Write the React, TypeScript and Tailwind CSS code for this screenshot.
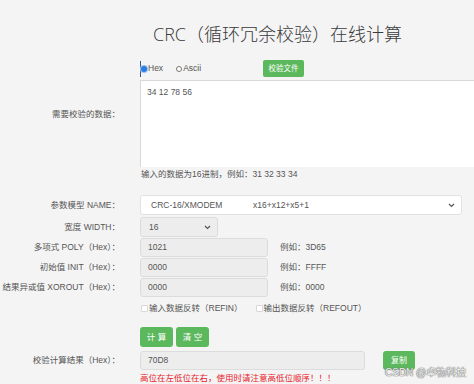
import React from "react";

const font = { fontFamily: '"Liberation Sans", Arial, "Noto Sans CJK SC", sans-serif' };

function Chevron() {
  return (
    <svg width="7" height="5" viewBox="0 0 7 5" className="shrink-0">
      <path d="M1 1 L3.5 3.5 L6 1" fill="none" stroke="#555" strokeWidth="1.2" />
    </svg>
  );
}

function Row({ label, children, h = 20 }: { label: string; children: React.ReactNode; h?: number }) {
  return (
    <div className="flex items-center" style={{ height: h }}>
      <div className="w-[120px] shrink-0 text-right text-[8.5px] text-[#555] whitespace-nowrap">{label}</div>
      <div className="ml-[20px] flex items-center">{children}</div>
    </div>
  );
}

export default function App() {
  return (
    <div className="relative w-[474px] h-[384px] overflow-hidden bg-[#f4f4f4] text-[#444]" style={font}>
      <div className="pt-[22px] pl-[153px] h-[46px] text-[18px] font-light leading-[24px] text-[#3a3a3a] whitespace-nowrap" style={{ fontFamily: '"Open Sans", "Noto Sans CJK SC", sans-serif' }}>
        CRC（循环冗余校验）在线计算
      </div>

      {/* radio row */}
      <div className="mt-[14px] ml-[140px] h-[17px] flex items-center text-[8.5px] text-[#555]">
        <div className="w-px h-[16px] bg-[#3d5a8a]" />
        <span className="w-[6px] h-[6px] rounded-full bg-[#2b7de0] ring-1 ring-[#9ec3f0]" />
        <span className="ml-[1px]">Hex</span>
        <span className="ml-[13px] w-[6px] h-[6px] rounded-full border border-[#777] bg-white" />
        <span className="ml-[1px]">Ascii</span>
        <div className="ml-[62px] h-[17px] w-[41px] rounded-[2px] bg-[#5cb85c] text-white text-[7.5px] flex items-center justify-center">校验文件</div>
      </div>

      {/* textarea */}
      <div className="mt-[3px] flex h-[87px]">
        <div className="w-[120px] shrink-0 text-right text-[8.5px] text-[#555] pt-[28px]">需要校验的数据：</div>
        <div className="ml-[20px] w-[340px] h-[87px] bg-white border-t border-l border-[#d8d8d8] px-[6px] pt-[5px] text-[8.5px] text-[#555]">34 12 78 56</div>
      </div>

      {/* hint */}
      <div className="ml-[141px] mt-[1px] h-[12px] leading-[12px] text-[8.5px] text-[#555] whitespace-nowrap">
        输入的数据为16进制，例如：31 32 33 34
      </div>

      <div className="mt-[15px]">
        <Row label="参数模型 NAME：">
          <div className="w-[322px] h-[20px] bg-white border border-[#e2e2e2] rounded-[3px] flex items-center pl-[10px] pr-[6px] text-[8.5px] text-[#555]">
            <span className="w-[102px]">CRC-16/XMODEM</span>
            <span>x16+x12+x5+1</span>
            <span className="ml-auto"><Chevron /></span>
          </div>
        </Row>
        <div className="h-[2px]" />
        <Row label="宽度 WIDTH：">
          <div className="w-[78px] h-[20px] bg-[#ededed] border border-[#dcdcdc] rounded-[3px] flex items-center pl-[8px] pr-[6px] text-[8.5px] text-[#555]">
            <span>16</span>
            <span className="ml-auto"><Chevron /></span>
          </div>
        </Row>
        {[
          ["多项式 POLY（Hex）：", "1021", "例如：3D65"],
          ["初始值 INIT（Hex）：", "0000", "例如：FFFF"],
          ["结果异或值 XOROUT（Hex）：", "0000", "例如：0000"],
        ].map(([l, v, e]) => (
          <Row key={l} label={l}>
            <div className="w-[128px] h-[19px] bg-[#ededed] border border-[#dcdcdc] rounded-[3px] flex items-center pl-[7px] text-[8.5px] text-[#555]">{v}</div>
            <span className="ml-[12px] text-[8.5px] text-[#555] whitespace-nowrap">{e}</span>
          </Row>
        ))}
      </div>

      {/* checkboxes */}
      <div className="ml-[141px] mt-[5px] h-[12px] flex items-center text-[8.5px] text-[#555] whitespace-nowrap">
        <span className="w-[7px] h-[7px] border border-[#d8d8d8] bg-white rounded-[1px]" />
        <span className="ml-[1px]">输入数据反转（REFIN）</span>
        <span className="ml-[13px] w-[7px] h-[7px] border border-[#d8d8d8] bg-white rounded-[1px]" />
        <span className="ml-[1px]">输出数据反转（REFOUT）</span>
      </div>

      {/* buttons */}
      <div className="ml-[140px] mt-[13px] flex gap-[3px]">
        <div className="w-[33px] h-[20px] rounded-[3px] bg-[#5cb85c] text-white text-[8.5px] flex items-center justify-center">计 算</div>
        <div className="w-[33px] h-[20px] rounded-[3px] bg-[#5cb85c] text-white text-[8.5px] flex items-center justify-center">清 空</div>
      </div>

      {/* result */}
      <div className="mt-[4px]">
        <Row label="校验计算结果（Hex）：" h={19}>
          <div className="w-[225px] h-[19px] bg-[#ededed] border border-[#dcdcdc] rounded-[3px] flex items-center pl-[7px] text-[8.5px] text-[#555]">70D8</div>
          <div className="ml-[18px] w-[32px] h-[19px] rounded-[3px] bg-[#5cb85c] text-white text-[8px] flex items-center justify-center">复制</div>
        </Row>
      </div>
      <div className="ml-[140px] mt-[2px] h-[12px] leading-[12px] text-[8.5px] text-[#e8202a] whitespace-nowrap">
        高位在左低位在右，使用时请注意高低位顺序！！！
      </div>

      <div className="absolute left-[385px] top-[366px] text-[10px] leading-[14px] text-[#eeeeee] whitespace-nowrap [text-shadow:0_0_1px_#7a7a7a,0_0_1px_#7a7a7a,0_0_1px_#7a7a7a]" style={{ fontFamily: '"Liberation Sans", "Noto Sans CJK SC", sans-serif' }}>
        CSDN @卓物科技
      </div>
    </div>
  );
}
